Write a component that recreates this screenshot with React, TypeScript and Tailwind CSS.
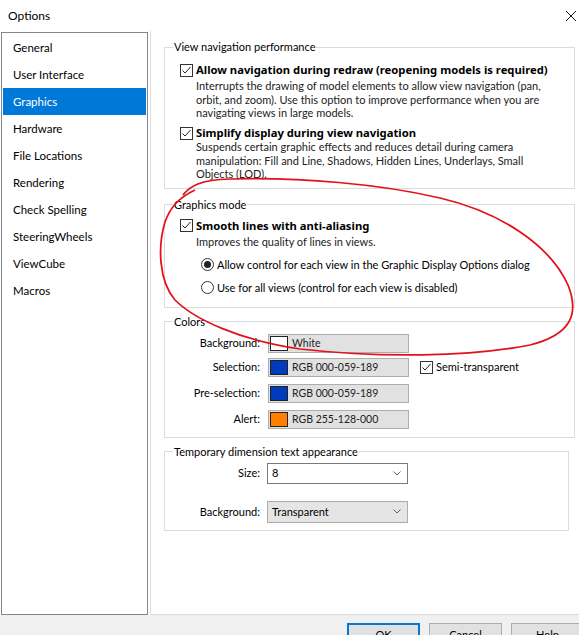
import React from "react";

const navItems = [
  "General",
  "User Interface",
  "Graphics",
  "Hardware",
  "File Locations",
  "Rendering",
  "Check Spelling",
  "SteeringWheels",
  "ViewCube",
  "Macros",
];

function CheckBox() {
  return (
    <span className="w-[13px] h-[13px] border border-[#333333] bg-white flex-none flex items-center justify-center">
      <svg width="11" height="11" viewBox="0 0 11 11">
        <path d="M1.5 5.5 L4 8 L9.5 2" fill="none" stroke="#222" strokeWidth="1" />
      </svg>
    </span>
  );
}

function Radio({ checked }: { checked?: boolean }) {
  return (
    <span className="w-[13px] h-[13px] rounded-full border border-[#333333] bg-white flex-none flex items-center justify-center">
      {checked && <span className="w-[7px] h-[7px] rounded-full bg-[#222222]" />}
    </span>
  );
}

function Chevron() {
  return (
    <svg width="8" height="5" viewBox="0 0 8 5" className="flex-none">
      <path d="M0.5 0.5 L4 4 L7.5 0.5" fill="none" stroke="#606060" strokeWidth="1" />
    </svg>
  );
}

function Title({ children }: { children: React.ReactNode }) {
  return <span className="font-['Noto_Sans',sans-serif] font-bold text-[11.25px]">{children}</span>;
}

function ColorRow({ label, swatch, value, extra }: { label: string; swatch: string; value: string; extra?: boolean }) {
  return (
    <div className="flex items-center h-[19px]">
      <span className="w-[95px] text-right">{label}</span>
      <div className="ml-[8px] w-[141px] h-[19px] bg-[#e1e1e1] border border-[#adadad] flex items-center pl-[1px]">
        <span className="w-[18px] h-[15px] border border-[#222222]" style={{ backgroundColor: swatch }} />
        <span className="ml-[4px] text-[10.5px] text-[#222]">{value}</span>
      </div>
      {extra && (
        <div className="ml-[11px] flex items-center gap-[3px]">
          <CheckBox />
          <span>Semi-transparent</span>
        </div>
      )}
    </div>
  );
}

export default function App() {
  return (
    <div className="w-[579px] h-[635px] bg-white relative overflow-hidden text-[11px] text-black font-['Lato',sans-serif] leading-[14px] whitespace-nowrap">
      <div className="h-[31px] flex items-center justify-between pl-[8px] pr-[3px] text-[12px]">
        <span>Options</span>
        <svg width="10" height="10" viewBox="0 0 10 10">
          <path d="M0 0 L10 10 M10 0 L0 10" stroke="#111" strokeWidth="1" />
        </svg>
      </div>

      <div className="flex h-[584px]">
        <div className="ml-[1px] mt-[1px] w-[147px] h-[583px] border border-[#828790] pt-[1px] px-[1px] text-[11.5px]">
          {navItems.map((item) => (
            <div
              key={item}
              className={
                item === "Graphics"
                  ? "h-[27px] flex items-center pl-[10px] bg-[#0078d7] text-white"
                  : "h-[27px] flex items-center pl-[10px]"
              }
            >
              {item}
            </div>
          ))}
        </div>

        <div className="ml-[2px] flex-1 border-l border-b border-[#dcdcdc] pl-[13px] pt-[9px]">
          <fieldset className="w-[411px] border border-[#dcdcdc] pl-[15px] pb-[7px]">
            <legend className="ml-[-7px] px-[1px] leading-[14px]">View navigation performance</legend>
            <div className="mt-[9px] flex items-center gap-[3px]">
              <CheckBox />
              <Title>Allow navigation during redraw (reopening models is required)</Title>
            </div>
            <p className="ml-[16px] mt-[2px] leading-[13.5px] text-[#222]">
              Interrupts the drawing of model elements to allow view navigation (pan,
              <br />
              orbit, and zoom). Use this option to improve performance when you are
              <br />
              navigating views in large models.
            </p>
            <div className="mt-[6.5px] flex items-center gap-[3px]">
              <CheckBox />
              <Title>Simplify display during view navigation</Title>
            </div>
            <p className="ml-[16px] leading-[13.5px] text-[#222]">
              Suspends certain graphic effects and reduces detail during camera
              <br />
              manipulation: Fill and Line, Shadows, Hidden Lines, Underlays, Small
              <br />
              Objects (LOD).
            </p>
          </fieldset>

          <fieldset className="mt-[9px] w-[411px] border border-[#dcdcdc] pl-[15px] pb-[12px]">
            <legend className="ml-[-7px] px-[1px] leading-[14px]">Graphics mode</legend>
            <div className="mt-[7px] flex items-center gap-[3px]">
              <CheckBox />
              <Title>Smooth lines with anti-aliasing</Title>
            </div>
            <p className="ml-[16px] mt-[2px] text-[#222]">Improves the quality of lines in views.</p>
            <div className="ml-[21px] mt-[9px] flex items-center gap-[3px]">
              <Radio checked />
              <span>Allow control for each view in the Graphic Display Options dialog</span>
            </div>
            <div className="ml-[21px] mt-[9px] flex items-center gap-[3px]">
              <Radio />
              <span>Use for all views (control for each view is disabled)</span>
            </div>
          </fieldset>

          <fieldset className="mt-[7px] w-[411px] border border-[#dcdcdc] pb-[8px]">
            <legend className="ml-[8px] px-[1px] leading-[14px]">Colors</legend>
            <div className="mt-[5px] flex flex-col gap-[5px]">
              <ColorRow label="Background:" swatch="#ffffff" value="White" />
              <ColorRow label="Selection:" swatch="#003bbd" value="RGB 000-059-189" extra />
            </div>
            <div className="mt-[7px] flex flex-col gap-[7px]">
              <ColorRow label="Pre-selection:" swatch="#003bbd" value="RGB 000-059-189" />
              <ColorRow label="Alert:" swatch="#ff8000" value="RGB 255-128-000" />
            </div>
          </fieldset>

          <fieldset className="mt-[7px] w-[405px] border border-[#dcdcdc] pb-[7px]">
            <legend className="ml-[8px] px-[1px] leading-[14px]">Temporary dimension text appearance</legend>
            <div className="mt-[4px] flex items-center">
              <span className="w-[95px] text-right">Size:</span>
              <div className="ml-[7px] w-[141px] h-[21px] bg-white border border-[#7a7a7a] flex items-center justify-between pl-[4px] pr-[6px]">
                <span>8</span>
                <Chevron />
              </div>
            </div>
            <div className="mt-[17px] flex items-center">
              <span className="w-[95px] text-right">Background:</span>
              <div className="ml-[7px] w-[141px] h-[22px] bg-[#e5e5e5] border border-[#acacac] flex items-center justify-between pl-[4px] pr-[6px]">
                <span>Transparent</span>
                <Chevron />
              </div>
            </div>
          </fieldset>
        </div>
      </div>

      <div className="h-[20px] bg-[#f0f0f0] flex items-start pt-[8px] pl-[347px] gap-[9px]">
        <div className="w-[73px] h-[23px] flex-none bg-[#e1e1e1] border-2 border-[#0078d7] flex items-center justify-center">OK</div>
        <div className="w-[73px] h-[23px] flex-none bg-[#e1e1e1] border border-[#adadad] flex items-center justify-center">Cancel</div>
        <div className="w-[73px] h-[23px] flex-none bg-[#e1e1e1] border border-[#adadad] flex items-center justify-center">Help</div>
      </div>

      <svg className="absolute left-0 top-0 pointer-events-none" width="579" height="635" viewBox="0 0 579 635">
        <path
          d="M 183 195 C 190 186, 200 180, 230 179 C 300 177, 380 184, 440 198 C 500 212, 550 245, 568 285 C 580 315, 570 335, 530 345 C 470 357, 380 358, 300 349 C 240 340, 195 320, 175 300 C 158 280, 158 245, 165 222 C 170 208, 178 198, 195 190"
          fill="none"
          stroke="#e2101a"
          strokeWidth="1.75"
        />
      </svg>
    </div>
  );
}
